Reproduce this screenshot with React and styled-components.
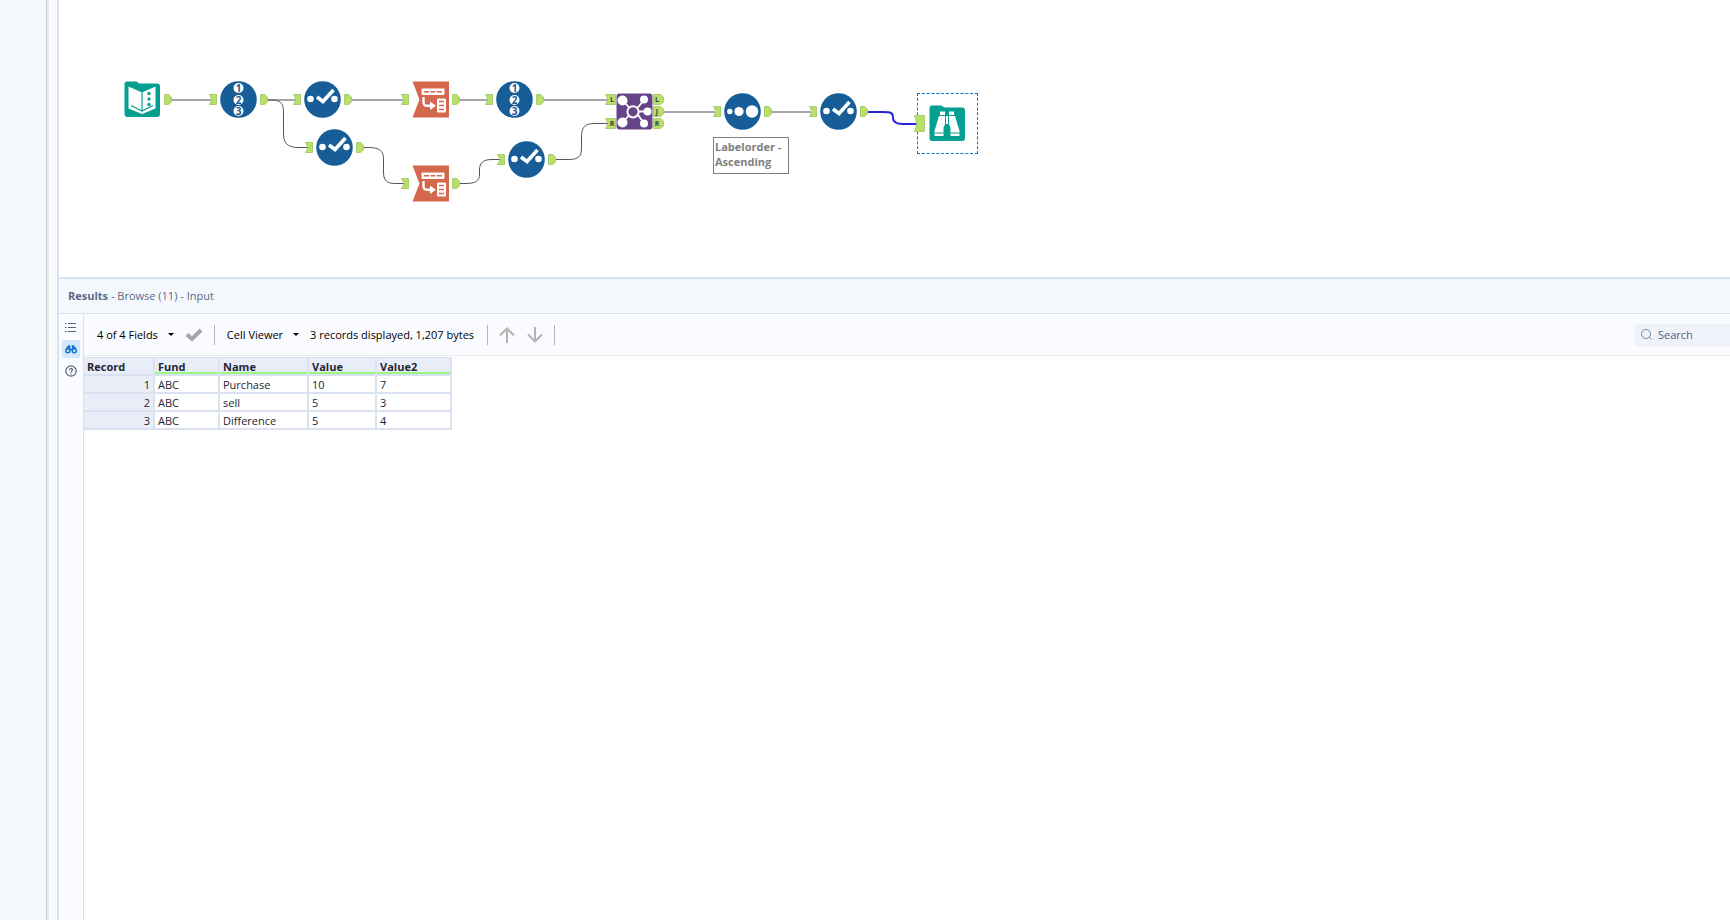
import React from 'react';
import styled, { createGlobalStyle, css } from 'styled-components';

const fields = ['Fund', 'Name', 'Value', 'Value2'];

const records = [
  ['ABC', 'Purchase', '10', '7'],
  ['ABC', 'sell', '5', '3'],
  ['ABC', 'Difference', '5', '4'],
];

// x and y are the centre of the tool on the canvas
const tools = [
  { id: 1, type: 'input', name: 'Text Input', x: 83, y: 99, outputs: [''] },
  { id: 2, type: 'recordId', name: 'Record ID', x: 179, y: 99, inputs: [''], outputs: [''] },
  { id: 3, type: 'select', name: 'Select', x: 263, y: 99, inputs: [''], outputs: [''] },
  { id: 4, type: 'select', name: 'Select', x: 275, y: 147, inputs: [''], outputs: [''] },
  { id: 5, type: 'transpose', name: 'Transpose', x: 371, y: 99, inputs: [''], outputs: [''] },
  { id: 6, type: 'transpose', name: 'Transpose', x: 371, y: 183, inputs: [''], outputs: [''] },
  { id: 7, type: 'recordId', name: 'Record ID', x: 455, y: 99, inputs: [''], outputs: [''] },
  { id: 8, type: 'select', name: 'Select', x: 467, y: 159, inputs: [''], outputs: [''] },
  { id: 9, type: 'join', name: 'Join', x: 575, y: 111, inputs: ['L', 'R'], outputs: ['L', 'J', 'R'] },
  { id: 10, type: 'sort', name: 'Sort', x: 683, y: 111, inputs: [''], outputs: [''], note: 'Labelorder - Ascending' },
  { id: 12, type: 'select', name: 'Select', x: 779, y: 111, inputs: [''], outputs: [''] },
  { id: 11, type: 'browse', name: 'Browse', x: 888, y: 123, inputs: [''], selected: true },
];

const wires = [
  { d: 'M112 100H154' },
  { d: 'M208 100H238' },
  { d: 'M292 100H348' },
  { d: 'M400 100H432' },
  { d: 'M484 100H550' },
  { d: 'M604 112H656' },
  { d: 'M712 112H752' },
  { d: 'M208 100H213C223 100 224.500 105 224.500 113V134C224.500 146 232 147.500 240 147.500H249', thin: true },
  { d: 'M304 147.500H309C321 147.500 324.500 151 324.500 159V172C324.500 182 329 183.500 337 183.500H346', thin: true },
  { d: 'M400 183.500H406C417 183.500 420.500 181 420.500 174V170C420.500 162 425 159.500 433 159.500H441', thin: true },
  { d: 'M496 159.500H509C519 159.500 522.500 157 522.500 148V137C522.500 127 526 123.500 536 123.500H550', thin: true },
  { d: 'M808 112H824C832 112 834 113 834 117V118C834 122 837 124 844 124H858', active: true },
];

function CircleBase() {
  return <circle cx='18.500' cy='18.500' r='18.300' fill='#175e99' />;
}

function FolderBase() {
  return (
    <path
      d='M3 .5h9.500l2.500 2H33a3 3 0 0 1 3 3V33a3 3 0 0 1-3 3H3.500a3 3 0 0 1-3-3V3A2.500 2.500 0 0 1 3 .5z'
      fill='#049f8e'
    />
  );
}

function ToolIcon({ type }) {
  switch (type) {
    case 'input':
      return (
        <>
          <FolderBase />
          <path d='M4.500 5.500 18 11.500 31.500 5.500v22L18 33 4.500 27.500z' fill='#fff' />
          <path d='M18 11.500v18.500M7 24.500l11 5.500 11-5.500' fill='none' stroke='#049f8e' strokeWidth='1.200' />
          <circle cx='25' cy='12.500' r='1.700' fill='#049f8e' />
          <circle cx='25' cy='18' r='1.700' fill='#049f8e' />
          <circle cx='25' cy='23.500' r='1.700' fill='#049f8e' />
        </>
      );
    case 'recordId':
      return (
        <>
          <CircleBase />
          {[7, 19, 30].map((cy, i) => (
            <g key={cy}>
              <circle cx='18.500' cy={cy} r='5' fill='#fff' />
              <text x='18.500' y={cy + 3.5} textAnchor='middle' fontSize='10' fontWeight='700' fill='#175e99'>
                {i + 1}
              </text>
            </g>
          ))}
        </>
      );
    case 'select':
      return (
        <>
          <CircleBase />
          <circle cx='6.500' cy='18' r='3.300' fill='#fff' />
          <circle cx='30.500' cy='18' r='3.300' fill='#fff' />
          <path d='M13 16l6 4.500L29.500 9' fill='none' stroke='#fff' strokeWidth='3.600' />
        </>
      );
    case 'transpose':
      return (
        <>
          <path d='M.5.500H37v36H.5l7-18z' fill='#d5674c' />
          <rect x='9.500' y='7.500' width='23' height='6.500' rx='1' fill='#fff' />
          <path d='M12 10.800h5M18.500 10.800h5M25 10.800h5' stroke='#d5674c' strokeWidth='1.500' />
          <path d='M11.500 16v5c0 3 1 3.800 4 3.800h4' fill='none' stroke='#fff' strokeWidth='2.400' />
          <path d='M18 20.500l6 4.300-6 4.200z' fill='#fff' />
          <rect x='25' y='17.500' width='9' height='14' rx='1' fill='#fff' />
          <path d='M27 20.500h5M27 24.500h5M27 28.500h5' stroke='#d5674c' strokeWidth='1.500' />
        </>
      );
    case 'join':
      return (
        <>
          <rect x='.5' y='.5' width='36' height='36' rx='3' fill='#664488' />
          <path d='M6.500 7l10 11.500-10 11M28 7l-9 11 9 12M19 18.500h12' fill='none' stroke='#fff' strokeWidth='1.800' />
          <circle cx='6.500' cy='7.500' r='5' fill='#fff' />
          <circle cx='6.500' cy='29.500' r='5' fill='#fff' />
          <circle cx='28' cy='6.500' r='4' fill='#fff' />
          <circle cx='31.500' cy='18.500' r='4' fill='#fff' />
          <circle cx='28' cy='30.500' r='4' fill='#fff' />
          <circle cx='17' cy='18.800' r='5.600' fill='#664488' stroke='#fff' strokeWidth='2' />
        </>
      );
    case 'sort':
      return (
        <>
          <CircleBase />
          <circle cx='5.800' cy='18.500' r='2.700' fill='#fff' />
          <circle cx='15' cy='18.500' r='4.600' fill='#fff' />
          <circle cx='28' cy='18.500' r='6.200' fill='#fff' />
        </>
      );
    default:
      return (
        <>
          <FolderBase />
          <path d='M11 6.500h5v3.500h-5zM20 6.500h5v3.500h-5z' fill='#fff' />
          <path d='M10 11h6v8.500l-1.500 3V31H5.500v-5zM20 11h6l4.500 15v5h-9v-8.500l-1.500-3zM17 11h2v8h-2z' fill='#fff' />
          <path d='M5.500 28H14.500M21.500 28h9' stroke='#049f8e' strokeWidth='1' />
        </>
      );
  }
}

function Port({ side, label, large }) {
  const wide = label !== '';
  const width = wide || large ? 11 : 8;
  const height = large ? 17 : 11;
  const right = width - 0.5;
  const bottom = height - 0.5;
  const middle = height / 2;
  const d = side === 'in'
    ? `M.5 .5H${right}V${bottom}H.5L3 ${middle}z`
    : `M.5 .5H${right - 3}L${right} 3V${bottom - 2.5}L${right - 3} ${bottom}H.5z`;

  return (
    <svg width={width} height={height}>
      <path d={d} fill='#bade67' stroke='#a4cf72' />
      {wide && (
        <text x={side === 'in' ? 7 : 4} y='8' textAnchor='middle' fontSize='7' fontWeight='700' fill='#2e4a34'>
          {label}
        </text>
      )}
    </svg>
  );
}

function Tool({ tool }) {
  const { type, name, x, y, inputs = [], outputs = [], note, selected } = tool;
  return (
    <ToolNode style={{ left: x, top: y }} $selected={selected}>
      <Ports $side='in' $labelled={inputs.length > 1} $selected={selected}>
        {inputs.map((label) => (
          <Port key={label} side='in' label={label} large={selected} />
        ))}
      </Ports>
      <svg width='37' height='37' role='img' aria-label={name}>
        <ToolIcon type={type} />
      </svg>
      <Ports $side='out' $labelled={outputs.length > 1}>
        {outputs.map((label) => (
          <Port key={label} side='out' label={label} />
        ))}
      </Ports>
      {note && <Note>{note}</Note>}
    </ToolNode>
  );
}

function Workflow() {
  return (
    <Canvas>
      <Wires>
        {wires.map((w) => (
          <path
            key={w.d}
            d={w.d}
            fill='none'
            stroke={w.active ? '#2424dc' : w.thin ? '#555' : '#a6a6a6'}
            strokeWidth={w.thin ? 1 : 2}
          />
        ))}
      </Wires>
      {tools.map((tool) => (
        <Tool key={tool.id} tool={tool} />
      ))}
    </Canvas>
  );
}

function SideTabs() {
  return (
    <Tabs>
      <TabButton aria-label='Messages'>
        <svg width='12' height='10' stroke='#56657f' strokeWidth='1'>
          <path d='M0 1.500h1.500M3 1.500h8M0 5.500h1.500M3 5.500h8M0 9.500h1.500M3 9.500h8' />
        </svg>
      </TabButton>
      <TabButton aria-label='Data' $active>
        <svg width='12' height='9' fill='none' stroke='#1274d2' strokeWidth='1.500'>
          <circle cx='2.800' cy='5.800' r='2' />
          <circle cx='9.200' cy='5.800' r='2' />
          <path d='M1.500 4 3.500 1h1v4M10.500 4l-2-3h-1v4M5 4.500h2' />
        </svg>
      </TabButton>
      <TabButton aria-label='Help'>
        <svg width='12' height='12' fill='none' stroke='#56657f' strokeWidth='1.200'>
          <circle cx='6' cy='6' r='5.200' />
          <path d='M4.500 5c0-2 3-2 3-.2 0 1.200-1.500 1-1.500 2.400M6 8.200v1.200' />
        </svg>
      </TabButton>
    </Tabs>
  );
}

function Toolbar() {
  return (
    <Bar>
      <DropButton>4 of 4 Fields <Caret /></DropButton>
      <IconButton aria-label='Apply'>
        <svg width='18' height='14' fill='none' stroke='#a6a6a6' strokeWidth='4'>
          <path d='M2 6.500l5 4.500L16 2' />
        </svg>
      </IconButton>
      <Separator />
      <DropButton>Cell Viewer <Caret /></DropButton>
      <Summary>3 records displayed, 1,207 bytes</Summary>
      <Separator />
      <Arrows>
        <IconButton aria-label='Previous'>
          <svg width='16' height='16' fill='none' stroke='#b4b4b4' strokeWidth='2'>
            <path d='M8 16V1.500M1 8.500l7-7 7 7' />
          </svg>
        </IconButton>
        <IconButton aria-label='Next'>
          <svg width='16' height='16' fill='none' stroke='#b4b4b4' strokeWidth='2'>
            <path d='M8 0v14.500M1 7.500l7 7 7-7' />
          </svg>
        </IconButton>
      </Arrows>
      <Separator />
      <Search>
        <svg width='12' height='12' fill='none' stroke='#7285ab' strokeWidth='1'>
          <circle cx='5' cy='5' r='4.500' />
          <path d='M8.300 8.300l2.200 2.200' />
        </svg>
        <input type='text' placeholder='Search' aria-label='Search' />
      </Search>
    </Bar>
  );
}

function ResultsTable() {
  return (
    <Table>
      <colgroup>
        <col width='71' />
        <col width='65' />
        <col width='89' />
        <col width='68' />
        <col width='75' />
      </colgroup>
      <thead>
        <tr>
          <HeadCell>Record</HeadCell>
          {fields.map((f) => (
            <HeadCell key={f} $field>{f}</HeadCell>
          ))}
        </tr>
      </thead>
      <tbody>
        {records.map((row, i) => (
          <tr key={i}>
            <RecordCell>{i + 1}</RecordCell>
            {row.map((value, j) => (
              <Cell key={j}>{value}</Cell>
            ))}
          </tr>
        ))}
      </tbody>
    </Table>
  );
}

function App() {
  return (
    <Page>
      <GlobalStyle />
      <LeftPanel />
      <Splitter />
      <Main>
        <Workflow />
        <Results>
          <ResultsHeader>
            <strong>Results</strong> - Browse (11) - Input
          </ResultsHeader>
          <ResultsBody>
            <SideTabs />
            <ResultsContent>
              <Toolbar />
              <ResultsTable />
            </ResultsContent>
          </ResultsBody>
        </Results>
      </Main>
    </Page>
  );
}

export default App;

const GlobalStyle = createGlobalStyle`
  * {
    box-sizing: border-box;
  }

  body {
    margin: 0;
    background: #fff;
    font-family: 'Open Sans', 'Noto Sans', sans-serif;
    font-size: 11px;
    color: #1e2636;
  }

  button, input {
    font: inherit;
    color: inherit;
    border: none;
    background: none;
    padding: 0;
  }

  svg {
    display: block;
    flex-shrink: 0;
  }
`;

const Page = styled.div`
  display: flex;
  min-height: 100vh;
  overflow: hidden;
`;

const LeftPanel = styled.aside`
  width: 46px;
  flex-shrink: 0;
  background: #f4f8fd;
`;

const Splitter = styled.div`
  width: 11px;
  flex-shrink: 0;
  background: #fafbfd;
  border-left: 1px solid #c8c8c8;
  box-shadow: inset 2px 0 0 #ececec;
`;

const Main = styled.main`
  flex: 1;
  min-width: 0;
  display: flex;
  flex-direction: column;
  border-left: 2px solid #dae2f1;
`;

const Canvas = styled.section`
  position: relative;
  height: 277px;
  overflow: hidden;
`;

const Wires = styled.svg`
  width: 100%;
  height: 100%;
`;

const ToolNode = styled.div`
  position: absolute;
  display: flex;
  align-items: center;
  justify-content: center;
  width: 61px;
  height: 61px;
  margin: -30px 0 0 -30px;

  ${({ $selected }) => $selected && css`
    outline: 1px dashed #0078d7;
    outline-offset: -1px;
  `}
`;

const Ports = styled.div`
  position: absolute;
  display: flex;
  flex-direction: column;
  gap: ${({ $side, $labelled }) => ($side === 'in' && $labelled ? 13 : 1)}px;

  ${({ $side, $labelled, $selected }) => $side === 'in'
    ? css`right: ${$labelled ? 49 : $selected ? 53 : 52}px;`
    : css`left: ${$labelled ? 49 : 52}px;`}
`;

const Note = styled.div`
  position: absolute;
  top: 56px;
  left: 1px;
  width: 76px;
  padding: 1px 1px 4px;
  border: 1px solid #808080;
  background: #fff;
  color: #808080;
  font-weight: 700;
  line-height: 15px;
`;

const Results = styled.section`
  flex: 1;
  display: flex;
  flex-direction: column;
  border-top: 2px solid #dae2f1;
`;

const ResultsHeader = styled.header`
  height: 35px;
  padding-left: 9px;
  line-height: 34px;
  background: #f4f8fd;
  border-bottom: 1px solid #dae2f1;
  color: #5c6a84;
  white-space: pre;
`;

const ResultsBody = styled.div`
  flex: 1;
  display: flex;
`;

const Tabs = styled.nav`
  width: 25px;
  flex-shrink: 0;
  display: flex;
  flex-direction: column;
  align-items: center;
  gap: 4px;
  padding-top: 4px;
  background: #fafbfe;
  border-right: 1px solid #dae2f1;
`;

const TabButton = styled.button`
  display: flex;
  align-items: center;
  justify-content: center;
  width: 18px;
  height: 18px;
  border-radius: 2px;
  background: ${({ $active }) => ($active ? '#d3e8fb' : 'transparent')};
`;

const ResultsContent = styled.div`
  flex: 1;
  min-width: 0;
`;

const Bar = styled.div`
  display: flex;
  align-items: center;
  height: 42px;
  padding-left: 13px;
  background: #fafbfe;
  border-bottom: 1px solid #eeeff3;
  color: #000;
`;

const DropButton = styled.button`
  display: flex;
  align-items: center;
  gap: 10px;
  white-space: nowrap;
`;

const Caret = styled.span`
  border: 3px solid transparent;
  border-top-color: #000;
  border-bottom: none;
`;

const IconButton = styled.button`
  margin-left: 11px;
`;

const Separator = styled.span`
  width: 1px;
  height: 20px;
  margin: 0 12px 0 11px;
  background: #b4b4b4;
`;

const Summary = styled.span`
  margin: 0 2px 0 11px;
  white-space: nowrap;
`;

const Arrows = styled.div`
  display: flex;
  gap: 1px;
  margin-left: -12px;
`;

const Search = styled.label`
  display: flex;
  align-items: center;
  gap: 5px;
  width: 96px;
  height: 22px;
  margin-left: auto;
  padding-left: 7px;
  border-radius: 4px 0 0 4px;
  background: #eff3f9;

  input {
    min-width: 0;
    flex: 1;
    outline: none;
  }

  input::placeholder {
    color: #4d628c;
    opacity: 1;
  }
`;

const Table = styled.table`
  table-layout: fixed;
  width: 368px;
  margin-top: 1px;
  border-collapse: separate;
  border-spacing: 0;
  border-top: 1px solid #dae2f1;
`;

const Cell = styled.td`
  height: 18px;
  padding: 1px 3px 0;
  line-height: 15px;
  text-align: left;
  border-right: 2px solid #dae2f1;
  border-bottom: 2px solid #dae2f1;
`;

const RecordCell = styled(Cell)`
  text-align: right;
  background: #e9edf8;
`;

const HeadCell = styled(Cell).attrs({ as: 'th' })`
  padding-top: 0;
  font-weight: 700;
  background: #e9edf8;
  box-shadow: ${({ $field }) => ($field ? 'inset 0 -2px 0 #98f77e' : 'none')};
`;
